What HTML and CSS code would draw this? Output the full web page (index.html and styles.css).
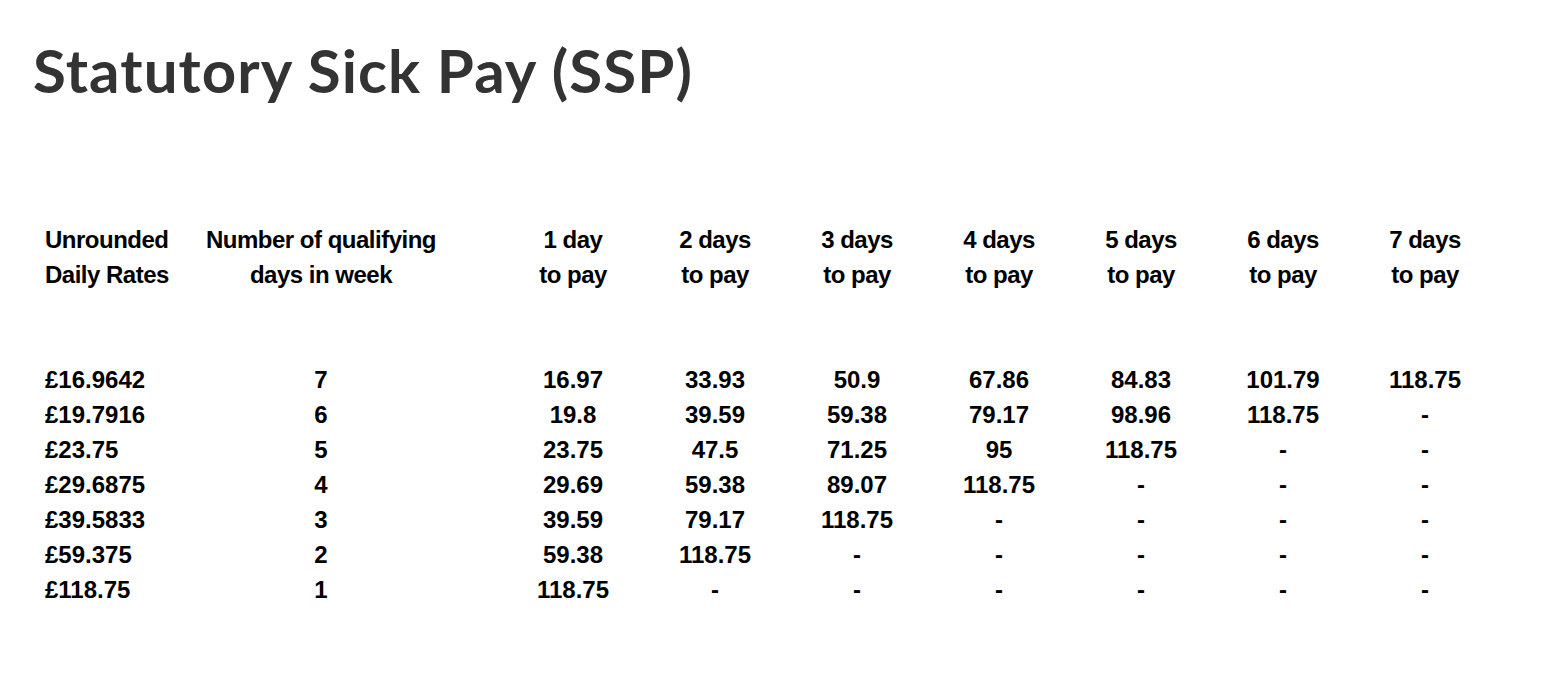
FILE: index.html
```html
<!DOCTYPE html>
<html lang="en">
<head>
<meta charset="utf-8">
<title>Statutory Sick Pay (SSP)</title>
<link rel="stylesheet" href="styles.css">
</head>
<body>
<div class="page">
  <h1 class="title">Statutory Sick Pay (SSP)</h1>
  <div class="table">
    <div class="row head">
      <div class="c rate">Unrounded<br>Daily Rates</div>
      <div class="c qual">Number of qualifying<br>days in week</div>
      <div class="c day">1 day<br>to pay</div>
      <div class="c day">2 days<br>to pay</div>
      <div class="c day">3 days<br>to pay</div>
      <div class="c day">4 days<br>to pay</div>
      <div class="c day">5 days<br>to pay</div>
      <div class="c day">6 days<br>to pay</div>
      <div class="c day">7 days<br>to pay</div>
    </div>
    <div class="body">
      <div class="row">
        <div class="c rate">£16.9642</div><div class="c qual">7</div>
        <div class="c day">16.97</div><div class="c day">33.93</div><div class="c day">50.9</div><div class="c day">67.86</div><div class="c day">84.83</div><div class="c day">101.79</div><div class="c day">118.75</div>
      </div>
      <div class="row">
        <div class="c rate">£19.7916</div><div class="c qual">6</div>
        <div class="c day">19.8</div><div class="c day">39.59</div><div class="c day">59.38</div><div class="c day">79.17</div><div class="c day">98.96</div><div class="c day">118.75</div><div class="c day">-</div>
      </div>
      <div class="row">
        <div class="c rate">£23.75</div><div class="c qual">5</div>
        <div class="c day">23.75</div><div class="c day">47.5</div><div class="c day">71.25</div><div class="c day">95</div><div class="c day">118.75</div><div class="c day">-</div><div class="c day">-</div>
      </div>
      <div class="row">
        <div class="c rate">£29.6875</div><div class="c qual">4</div>
        <div class="c day">29.69</div><div class="c day">59.38</div><div class="c day">89.07</div><div class="c day">118.75</div><div class="c day">-</div><div class="c day">-</div><div class="c day">-</div>
      </div>
      <div class="row">
        <div class="c rate">£39.5833</div><div class="c qual">3</div>
        <div class="c day">39.59</div><div class="c day">79.17</div><div class="c day">118.75</div><div class="c day">-</div><div class="c day">-</div><div class="c day">-</div><div class="c day">-</div>
      </div>
      <div class="row">
        <div class="c rate">£59.375</div><div class="c qual">2</div>
        <div class="c day">59.38</div><div class="c day">118.75</div><div class="c day">-</div><div class="c day">-</div><div class="c day">-</div><div class="c day">-</div><div class="c day">-</div>
      </div>
      <div class="row">
        <div class="c rate">£118.75</div><div class="c qual">1</div>
        <div class="c day">118.75</div><div class="c day">-</div><div class="c day">-</div><div class="c day">-</div><div class="c day">-</div><div class="c day">-</div><div class="c day">-</div>
      </div>
    </div>
  </div>
</div>
</body>
</html>
```

FILE: styles.css
```css
html, body {
  margin: 0;
  padding: 0;
  background: #ffffff;
}

.page {
  width: 1560px;
  height: 692px;
  overflow: hidden;
}

.title {
  margin: 40px 0 0 33px;
  font-family: "Lato", "Open Sans", sans-serif;
  font-weight: 700;
  font-size: 60px;
  line-height: 60px;
  letter-spacing: 1.1px;
  color: #333333;
}

.table {
  margin-top: 122px;
  padding-left: 45px;
  font-family: "Liberation Sans", Arial, sans-serif;
  font-weight: 700;
  font-size: 24px;
  line-height: 35px;
  color: #000000;
}

.row {
  display: grid;
  grid-template-columns: 155px 302px repeat(7, 142px);
}

.head {
  letter-spacing: -0.5px;
}

.body {
  margin-top: 70px;
}

.c {
  white-space: nowrap;
}

.rate {
  text-align: left;
}

.qual {
  text-align: center;
  padding-right: 60px;
}

.day {
  text-align: center;
}
```
